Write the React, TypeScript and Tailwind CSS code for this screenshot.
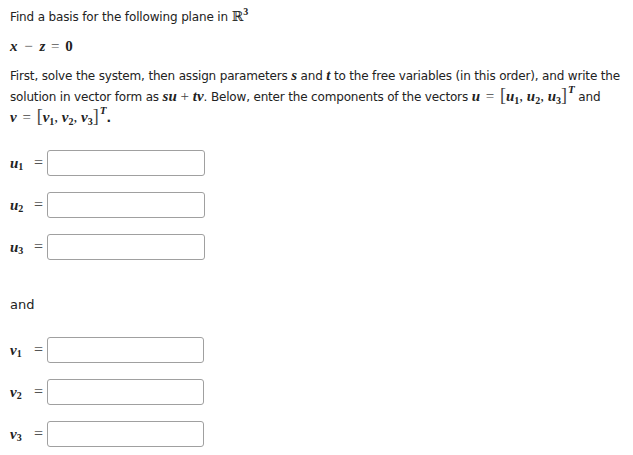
import React from "react";

const SERIF = "font-['Liberation_Serif',serif]";

const V = ({ children }: { children: React.ReactNode }) => (
  <span className="italic font-bold">{children}</span>
);

const N = ({ children }: { children: React.ReactNode }) => (
  <span className="font-bold text-[10px] relative top-[3px] leading-none">{children}</span>
);

const T = () => (
  <span className="italic font-bold text-[11px] relative -top-[8px] leading-none ml-[1px]">T</span>
);

const LB = () => <span className="text-[18px] leading-none text-[#444] font-normal">[</span>;
const RB = () => <span className="text-[18px] leading-none text-[#444] font-normal">]</span>;

function Vec({ v }: { v: string }) {
  return (
    <span className={`${SERIF} text-[15px] leading-none tracking-normal`}>
      <V>{v}</V> <span className="text-[#444] mx-[2px]">=</span> <LB />
      <V>{v}</V>
      <N>1</N>, <V>{v}</V>
      <N>2</N>, <V>{v}</V>
      <N>3</N>
      <RB />
      <T />
    </span>
  );
}

function Row({ v, n, w }: { v: string; n: string; w: string }) {
  return (
    <div className="flex items-center h-[26px]">
      <div className={`w-[37px] flex items-center ${SERIF}`}>
        <span className="italic font-bold text-[15px]">{v}</span>
        <span className="font-bold text-[10px] relative top-[3px]">{n}</span>
        <span className="ml-auto mr-[4px] text-[16px] text-[#555]">=</span>
      </div>
      <div className={`${w} h-[26px] border border-[#a0a0a0] rounded-[3px] bg-white`} />
    </div>
  );
}

export default function App() {
  return (
    <div className="w-[633px] h-[455px] bg-white text-[#222] font-['DejaVu_Sans',sans-serif] text-[12px] pl-[10px] pt-[6px]">
      <div className="h-[20px] leading-[20px] whitespace-nowrap tracking-[-0.15px]">
        Find a basis for the following plane in{" "}
        <span className="font-['DejaVu_Serif',serif] text-[14px]">ℝ</span>
        <span className={`${SERIF} text-[10px] font-bold relative -top-[6px] leading-none`}>3</span>
      </div>
      <div className={`mt-[10px] h-[20px] leading-[20px] ${SERIF} text-[15px]`}>
        <V>x</V> <span className="mx-[3px] text-[#555]">−</span> <V>z</V>{" "}
        <span className="mx-[2px] text-[#555]">=</span> <span className="font-bold">0</span>
      </div>
      <div className="mt-[9px] whitespace-nowrap tracking-[-0.17px]">
        <div className="h-[21px] leading-[21px]">
          First, solve the system, then assign parameters{" "}
          <span className={`${SERIF} text-[15px] italic font-bold`}>s</span> and{" "}
          <span className={`${SERIF} text-[15px] italic font-bold`}>t</span> to the free variables (in
          this order), and write the
        </div>
        <div className="h-[21px] leading-[21px]">
          solution in vector form as{" "}
          <span className={`${SERIF} text-[15px] tracking-normal`}>
            <V>su</V> <span className="text-[#444]">+</span> <V>tv</V>
          </span>
          . Below, enter the components of the vectors <Vec v="u" /> and
        </div>
        <div className="h-[21px] leading-[21px]">
          <Vec v="v" />
          <span className="font-bold">.</span>
        </div>
      </div>
      <div className="mt-[22px] flex flex-col gap-[16px]">
        <Row v="u" n="1" w="w-[158px]" />
        <Row v="u" n="2" w="w-[158px]" />
        <Row v="u" n="3" w="w-[158px]" />
      </div>
      <div className="mt-[35px] h-[20px] leading-[20px] text-[13px]">and</div>
      <div className="mt-[22px] flex flex-col gap-[16px]">
        <Row v="v" n="1" w="w-[157px]" />
        <Row v="v" n="2" w="w-[157px]" />
        <Row v="v" n="3" w="w-[157px]" />
      </div>
    </div>
  );
}
